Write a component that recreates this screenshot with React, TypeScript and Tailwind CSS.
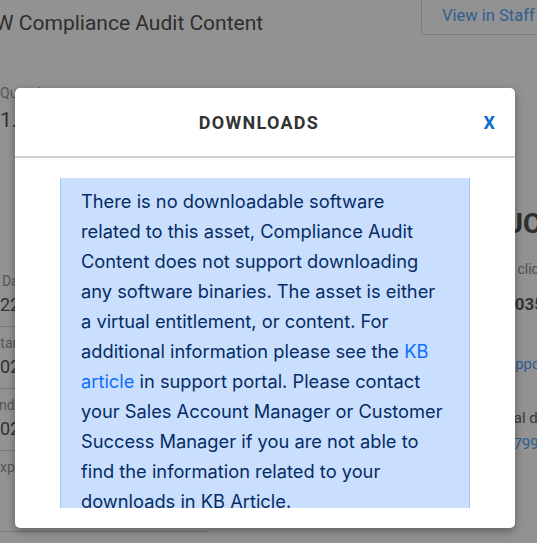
import { useState } from 'react'

interface DetailRow {
  label: string
  value: string
  shift: string
}

// fields of the page behind the dialog, only their left edge shows
const rows: DetailRow[] = [
  { label: 'PO Date', value: '22 Mar 2022', shift: '-ml-[20px]' },
  { label: 'Start Date', value: '02 Apr 2022', shift: '-ml-[8px]' },
  { label: 'End Date', value: '02 Apr 2025', shift: '-ml-[9px]' },
  { label: 'Expiry', value: '', shift: '-ml-[8px]' },
]

function PageBehind() {
  return (
    <div className="flex flex-col font-['Roboto',sans-serif]">
      <div className="flex items-start justify-between">
        <h1 className="-ml-[5px] pt-[8px] text-[21px] leading-[30px] font-normal text-[#2e2e2e]">
          W Compliance Audit Content
        </h1>
        <button className="-mt-[5px] mr-[-34px] h-[40px] w-[150px] shrink-0 rounded-[4px] border border-[#7c7c7c] pl-[20px] pt-[3px] text-left text-[16.5px] text-[#2f5f8f]">
          View in Staff
        </button>
      </div>
      <div className="flex">
        <div className="flex w-[209px] shrink-0 flex-col">
          <div className="mt-[45px] text-[14px] leading-[20px] text-[#555]">Quantity</div>
          <div className="mt-[3px] text-[21px] leading-[28px] text-[#333]">1.00</div>
          <div className="mt-[131px] flex flex-col">
            {rows.map((row, i) => (
              <div
                key={row.label}
                className={
                  i === rows.length - 1
                    ? 'border-b border-[#7a7a7a] pt-[6px] pb-[28px]'
                    : 'border-b border-[#7a7a7a] pt-[6px] pb-[9px]'
                }
              >
                <div className={`${row.shift} whitespace-nowrap text-[14px] leading-[20px] text-[#555]`}>
                  {row.label}
                </div>
                <div className="mt-[2px] h-[24px] text-[18px] leading-[24px] text-[#333]">{row.value}</div>
              </div>
            ))}
          </div>
        </div>
        <div className="ml-[222px] mt-[168px] flex shrink-0 flex-col whitespace-nowrap">
          <div className="text-[28px] leading-[36px] font-bold text-[#2e2e2e]">PRODUCT</div>
          <div className="ml-[41px] mt-[18px] text-[14px] leading-[18px] text-[#4f4f4f]">Please click here</div>
          <div className="ml-[74px] mt-[15px] text-[17px] leading-[22px] font-bold text-[#333]">20358H</div>
          <div className="ml-[67px] mt-[39px] text-[15px] leading-[20px] text-[#2c5f91]">Support</div>
          <div className="ml-[27px] mt-[34px] text-[15px] leading-[20px] text-[#3a3a3a]">Additional details</div>
          <div className="ml-[74px] mt-[6px] text-[15px] leading-[20px] text-[#2c5f91]">17991</div>
        </div>
      </div>
    </div>
  )
}

export default function App() {
  const [open, setOpen] = useState(true)

  return (
    <div className="relative h-[543px] w-[537px] overflow-hidden bg-[#929292]">
      <PageBehind />
      {open && (
        <div className="absolute inset-0">
          <div className="ml-[15px] mt-[88px] w-[500px] rounded-[5px] bg-white shadow-[0_3px_9px_rgba(0,0,0,0.35)]">
            <div className="grid h-[70px] grid-cols-[1fr_auto_1fr] items-center border-b-2 border-[#d0d0d0] pr-[12px] font-['Roboto',sans-serif]">
              <span />
              <h2 className="text-[18px] font-bold tracking-[1.3px] text-[#333]">DOWNLOADS</h2>
              <div className="flex justify-end pr-[8px]">
                <button onClick={() => setOpen(false)} className="text-[18px] font-bold text-[#0b6bd1]">
                  X
                </button>
              </div>
            </div>
            <div className="px-[45px] py-[20px]">
              <div className="h-[330px] overflow-hidden">
                <div className="border-x border-[#9ec5fe] bg-[#c9dffd] pl-[20px] pr-[22px] pt-[8px] pb-[16px] font-['Inter',sans-serif] text-[18.3px] leading-[30px] text-[#052c65]">
                  There is no downloadable software
                  <br />
                  related to this asset, Compliance Audit
                  <br />
                  Content does not support downloading
                  <br />
                  any software binaries. The asset is either
                  <br />
                  a virtual entitlement, or content. For
                  <br />
                  additional information please see the{' '}
                  <a href="#" className="text-[#0d6efd]">
                    KB
                    <br />
                    article
                  </a>{' '}
                  in support portal. Please contact
                  <br />
                  your Sales Account Manager or Customer
                  <br />
                  Success Manager if you are not able to
                  <br />
                  find the information related to your
                  <br />
                  downloads in KB Article.
                </div>
              </div>
            </div>
          </div>
        </div>
      )}
    </div>
  )
}
